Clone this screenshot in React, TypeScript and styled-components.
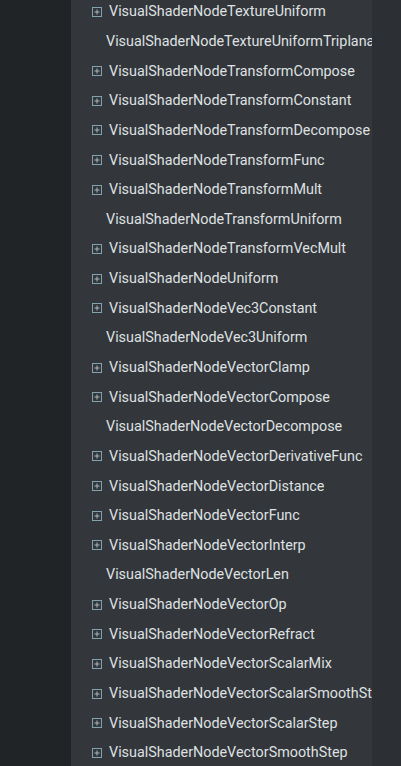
import React from "react";
import styled, { createGlobalStyle } from "styled-components";

const Global = createGlobalStyle`
  html, body { margin: 0; padding: 0; background: #212427; }
  body { font-family: Roboto, "Noto Sans", sans-serif; }
`;

const Page = styled.div`
  display: flex;
  width: 401px;
  height: 766px;
  overflow: hidden;
  background: #212427;
`;

const Sidebar = styled.div`
  width: 71px;
  flex: none;
  background: #212427;
`;

const Panel = styled.div`
  width: 301px;
  flex: none;
  background: #33363a;
  overflow: hidden;
`;

const Gutter = styled.div`
  flex: 1;
  background: #2c2f33;
`;

const List = styled.ul`
  list-style: none;
  margin: -3px 0 0 0;
  padding: 0;
`;

const Row = styled.li<{ $leaf: boolean }>`
  display: flex;
  align-items: center;
  height: 29.65px;
  padding-left: ${(p) => (p.$leaf ? "35px" : "21px")};
  white-space: nowrap;
  color: #dfe1e3;
  font-size: 14.35px;
`;

const Icon = styled.svg`
  width: 10px;
  height: 10px;
  flex: none;
  margin-right: 7px;
`;

const Label = styled.span``;

const items: [string, boolean][] = [
  ["VisualShaderNodeTextureUniform", false],
  ["VisualShaderNodeTextureUniformTriplanar", true],
  ["VisualShaderNodeTransformCompose", false],
  ["VisualShaderNodeTransformConstant", false],
  ["VisualShaderNodeTransformDecompose", false],
  ["VisualShaderNodeTransformFunc", false],
  ["VisualShaderNodeTransformMult", false],
  ["VisualShaderNodeTransformUniform", true],
  ["VisualShaderNodeTransformVecMult", false],
  ["VisualShaderNodeUniform", false],
  ["VisualShaderNodeVec3Constant", false],
  ["VisualShaderNodeVec3Uniform", true],
  ["VisualShaderNodeVectorClamp", false],
  ["VisualShaderNodeVectorCompose", false],
  ["VisualShaderNodeVectorDecompose", true],
  ["VisualShaderNodeVectorDerivativeFunc", false],
  ["VisualShaderNodeVectorDistance", false],
  ["VisualShaderNodeVectorFunc", false],
  ["VisualShaderNodeVectorInterp", false],
  ["VisualShaderNodeVectorLen", true],
  ["VisualShaderNodeVectorOp", false],
  ["VisualShaderNodeVectorRefract", false],
  ["VisualShaderNodeVectorScalarMix", false],
  ["VisualShaderNodeVectorScalarSmoothStep", false],
  ["VisualShaderNodeVectorScalarStep", false],
  ["VisualShaderNodeVectorSmoothStep", false],
];

const PlusBox = () => (
  <Icon viewBox="0 0 10 10">
    <rect x="0.5" y="0.5" width="9" height="9" fill="none" stroke="#7fa2ad" strokeWidth="1" />
    <path d="M2.5 5h5M5 2.5v5" stroke="#a9b8bf" strokeWidth="1" />
  </Icon>
);

export default function App() {
  return (
    <>
      <Global />
      <Page>
        <Sidebar />
        <Panel>
          <List>
            {items.map(([name, leaf]) => (
              <Row key={name} $leaf={leaf}>
                {!leaf && <PlusBox />}
                <Label>{name}</Label>
              </Row>
            ))}
          </List>
        </Panel>
        <Gutter />
      </Page>
    </>
  );
}
